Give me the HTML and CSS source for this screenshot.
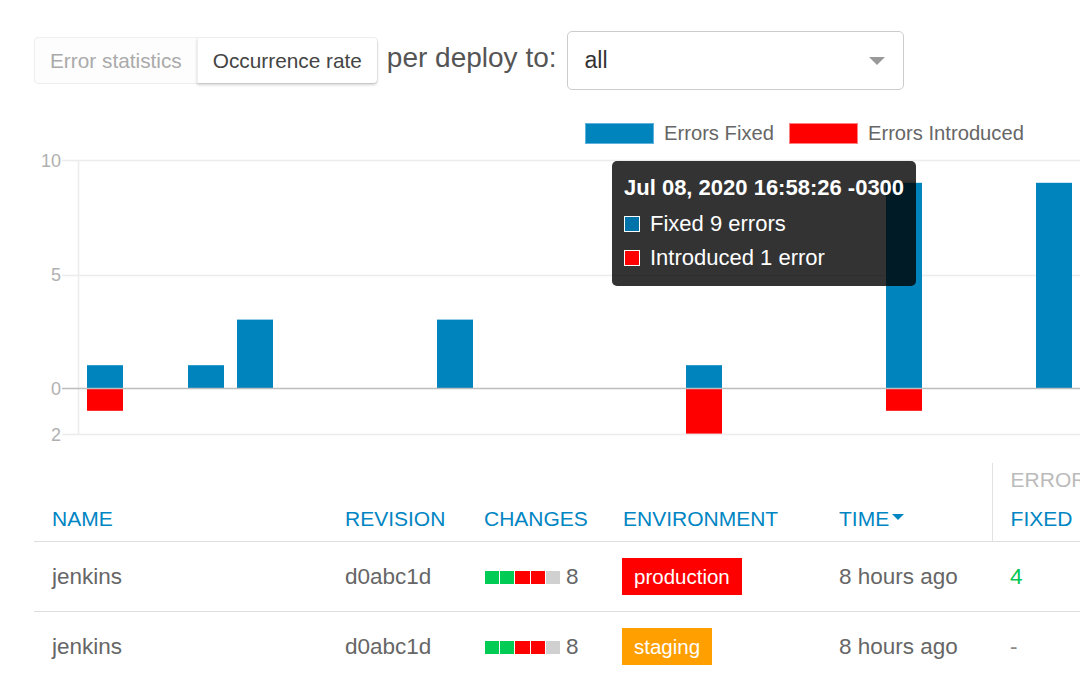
FILE: index.html
```html
<!DOCTYPE html>
<html lang="en">
<head>
    <meta charset="UTF-8">
    <title>Deploys</title>
    <link rel="stylesheet" href="styles.css">
</head>
<body>
    <div class="toolbar">
        <div class="segmented">
            <button class="segment">Error statistics</button>
            <button class="segment active">Occurrence rate</button>
        </div>
        <span class="per-deploy">per deploy to:</span>
        <div class="select">
            <span>all</span>
            <span class="select-caret"></span>
        </div>
    </div>

    <div class="legend">
        <span class="legend-box fixed"></span>
        <span class="legend-label">Errors Fixed</span>
        <span class="legend-box introduced"></span>
        <span class="legend-label">Errors Introduced</span>
    </div>

    <div class="chart">
        <svg class="chart-svg" width="1080" height="295" viewBox="0 150 1080 295">
            <g class="grid">
                <line x1="62" y1="160.5" x2="1080" y2="160.5" />
                <line x1="62" y1="275.5" x2="1080" y2="275.5" />
                <line x1="62" y1="434.5" x2="1080" y2="434.5" />
                <line x1="78.5" y1="160" x2="78.5" y2="435" />
            </g>
            <g class="y-labels">
                <text x="61" y="161">10</text>
                <text x="61" y="275">5</text>
                <text x="61" y="389">0</text>
                <text x="61" y="435">2</text>
            </g>
            <g class="bars-fixed">
                <rect x="87" y="365.2" width="36" height="22.8" />
                <rect x="188" y="365.2" width="36" height="22.8" />
                <rect x="237" y="319.6" width="36" height="68.4" />
                <rect x="437" y="319.6" width="36" height="68.4" />
                <rect x="686" y="365.2" width="36" height="22.8" />
                <rect x="886" y="182.8" width="36" height="205.2" />
                <rect x="1036" y="182.8" width="36" height="205.2" />
            </g>
            <g class="bars-introduced">
                <rect x="87" y="388" width="36" height="22.8" />
                <rect x="686" y="388" width="36" height="45.6" />
                <rect x="886" y="388" width="36" height="22.8" />
            </g>
            <line class="zero-line" x1="62" y1="388.5" x2="1080" y2="388.5" />
        </svg>

        <div class="tooltip">
            <div class="tooltip-title">Jul 08, 2020 16:58:26 -0300</div>
            <div class="tooltip-row"><span class="swatch fixed"></span>Fixed 9 errors</div>
            <div class="tooltip-row"><span class="swatch introduced"></span>Introduced 1 error</div>
        </div>
    </div>

    <table class="deploys">
        <colgroup>
            <col style="width: 293px">
            <col style="width: 139px">
            <col style="width: 139px">
            <col style="width: 216px">
            <col style="width: 171px">
            <col style="width: 200px">
        </colgroup>
        <thead>
            <tr class="group-row">
                <th colspan="5"></th>
                <th class="group">ERRORS</th>
            </tr>
            <tr class="head-row">
                <th>NAME</th>
                <th>REVISION</th>
                <th>CHANGES</th>
                <th>ENVIRONMENT</th>
                <th>TIME<span class="sort-caret"></span></th>
                <th class="group">FIXED</th>
            </tr>
        </thead>
        <tbody>
            <tr>
                <td>jenkins</td>
                <td>d0abc1d</td>
                <td>
                    <span class="changes">
                        <span class="sq add"></span><span class="sq add"></span><span class="sq del"></span><span class="sq del"></span><span class="sq none"></span>
                    </span><span class="change-count">8</span>
                </td>
                <td><span class="badge production">production</span></td>
                <td>8 hours ago</td>
                <td class="fixed-count">4</td>
            </tr>
            <tr>
                <td>jenkins</td>
                <td>d0abc1d</td>
                <td>
                    <span class="changes">
                        <span class="sq add"></span><span class="sq add"></span><span class="sq del"></span><span class="sq del"></span><span class="sq none"></span>
                    </span><span class="change-count">8</span>
                </td>
                <td><span class="badge staging">staging</span></td>
                <td>8 hours ago</td>
                <td class="empty">-</td>
            </tr>
        </tbody>
    </table>
</body>
</html>
```

FILE: styles.css
```css
body {
    margin: 0;
    padding: 0;
    background-color: #ffffff;
    color: #666;
    font-family: "Liberation Sans", Arial, sans-serif;
    overflow: hidden;
    width: 1080px;
    height: 680px;
}
.toolbar {
    display: flex;
    align-items: center;
    margin-top: 31px;
    padding-left: 34px;
    height: 59px;
}
.segmented {
    display: flex;
    height: 47px;
    border: 1px solid #eee;
    border-radius: 4px;
    background-color: #fdfdfd;
    box-sizing: border-box;
}
.segment {
    font-family: inherit;
    font-size: 20.8px;
    color: #aaa;
    background: transparent;
    border: none;
    padding: 0 15px;
    cursor: pointer;
}
.segment.active {
    color: #444;
    background-color: #fff;
    border-left: 1px solid #eee;
    border-radius: 0 4px 4px 0;
    box-shadow: 0 2px 3px rgba(0, 0, 0, 0.18);
}
.per-deploy {
    font-size: 28px;
    color: #555;
    margin: 0 10px 0 9px;
    position: relative;
    top: -3px;
}
.select {
    display: flex;
    align-items: center;
    justify-content: space-between;
    width: 337px;
    height: 59px;
    box-sizing: border-box;
    border: 1px solid #ccc;
    border-radius: 5px;
    padding: 0 18px 0 17px;
    font-size: 23px;
    color: #333;
}
.select-caret {
    width: 0;
    height: 0;
    border-left: 8px solid transparent;
    border-right: 8px solid transparent;
    border-top: 8px solid #999;
}
.legend {
    display: flex;
    align-items: center;
    margin-top: 32px;
    height: 22px;
    padding-left: 585px;
}
.legend-box {
    width: 69px;
    height: 21px;
    box-sizing: border-box;
}
.legend-box.fixed {
    background-color: #0084be;
    border: 1px solid #5fb2dc;
}
.legend-box.introduced {
    background-color: #ff0000;
    border: 1px solid #ff8080;
    margin-left: 15px;
}
.legend-label {
    font-size: 20.2px;
    color: #666;
    margin-left: 10px;
}
.chart {
    position: relative;
    margin-top: 6px;
    height: 295px;
}
.chart-svg {
    display: block;
}
.grid line {
    stroke: #ececec;
    stroke-width: 1.5;
}
.zero-line {
    stroke: #bdbdbd;
    stroke-width: 1.5;
}
.y-labels text {
    font-family: "Liberation Sans", Arial, sans-serif;
    font-size: 18px;
    fill: #b0b0b0;
    text-anchor: end;
    dominant-baseline: central;
}
.bars-fixed rect {
    fill: #0084be;
}
.bars-introduced rect {
    fill: #ff0000;
}
.tooltip {
    position: absolute;
    left: 612px;
    top: 11px;
    width: 304px;
    height: 125px;
    box-sizing: border-box;
    padding: 14px 8px 0 12px;
    background-color: rgba(0, 0, 0, 0.8);
    border-radius: 5px;
    color: #fff;
    white-space: nowrap;
}
.tooltip-title {
    font-weight: bold;
    font-size: 22px;
    line-height: 26px;
    margin-bottom: 6px;
}
.tooltip-row {
    display: flex;
    align-items: center;
    font-size: 22px;
    line-height: 34px;
}
.swatch {
    width: 16px;
    height: 16px;
    box-sizing: border-box;
    border: 1.5px solid #fff;
    margin-right: 10px;
}
.swatch.fixed {
    background-color: #0073aa;
}
.swatch.introduced {
    background-color: #ff0000;
}
.deploys {
    margin-top: 18px;
    margin-left: 34px;
    border-collapse: collapse;
    table-layout: fixed;
    width: 1158px;
}
.deploys th {
    text-align: left;
    font-weight: normal;
    font-size: 21px;
    color: #0085c3;
    padding: 0 0 0 18px;
    vertical-align: middle;
    white-space: nowrap;
}
.group-row th {
    height: 33px;
}
.group-row th.group {
    color: #bbb;
}
.head-row th {
    height: 45px;
    border-bottom: 1px solid #dedede;
}
.deploys th.group {
    border-left: 1px solid #e2e2e2;
}
.sort-caret {
    display: inline-block;
    width: 0;
    height: 0;
    margin-left: 3px;
    vertical-align: middle;
    position: relative;
    top: -3px;
    border-left: 6px solid transparent;
    border-right: 6px solid transparent;
    border-top: 6px solid #0085c3;
}
.deploys td {
    font-size: 22.5px;
    color: #666;
    padding: 0 0 0 18px;
    height: 69px;
    border-bottom: 1px solid #dedede;
    vertical-align: middle;
    white-space: nowrap;
}
.changes {
    display: inline-flex;
    gap: 1px;
    vertical-align: middle;
    margin-left: 1px;
}
.sq {
    width: 14.2px;
    height: 13px;
}
.sq.add {
    background-color: #00cc55;
}
.sq.del {
    background-color: #ff0000;
}
.sq.none {
    background-color: #d0d0d0;
}
.change-count {
    margin-left: 6px;
    vertical-align: middle;
}
.badge {
    display: inline-block;
    height: 37px;
    line-height: 37px;
    padding: 0 12px;
    font-size: 20.5px;
    color: #fff;
    margin-left: -1px;
}
.badge.production {
    background-color: #ff0000;
}
.badge.staging {
    background-color: #ff9f00;
}
.fixed-count {
    color: #00c853 !important;
}
.empty {
    color: #888 !important;
}
```
